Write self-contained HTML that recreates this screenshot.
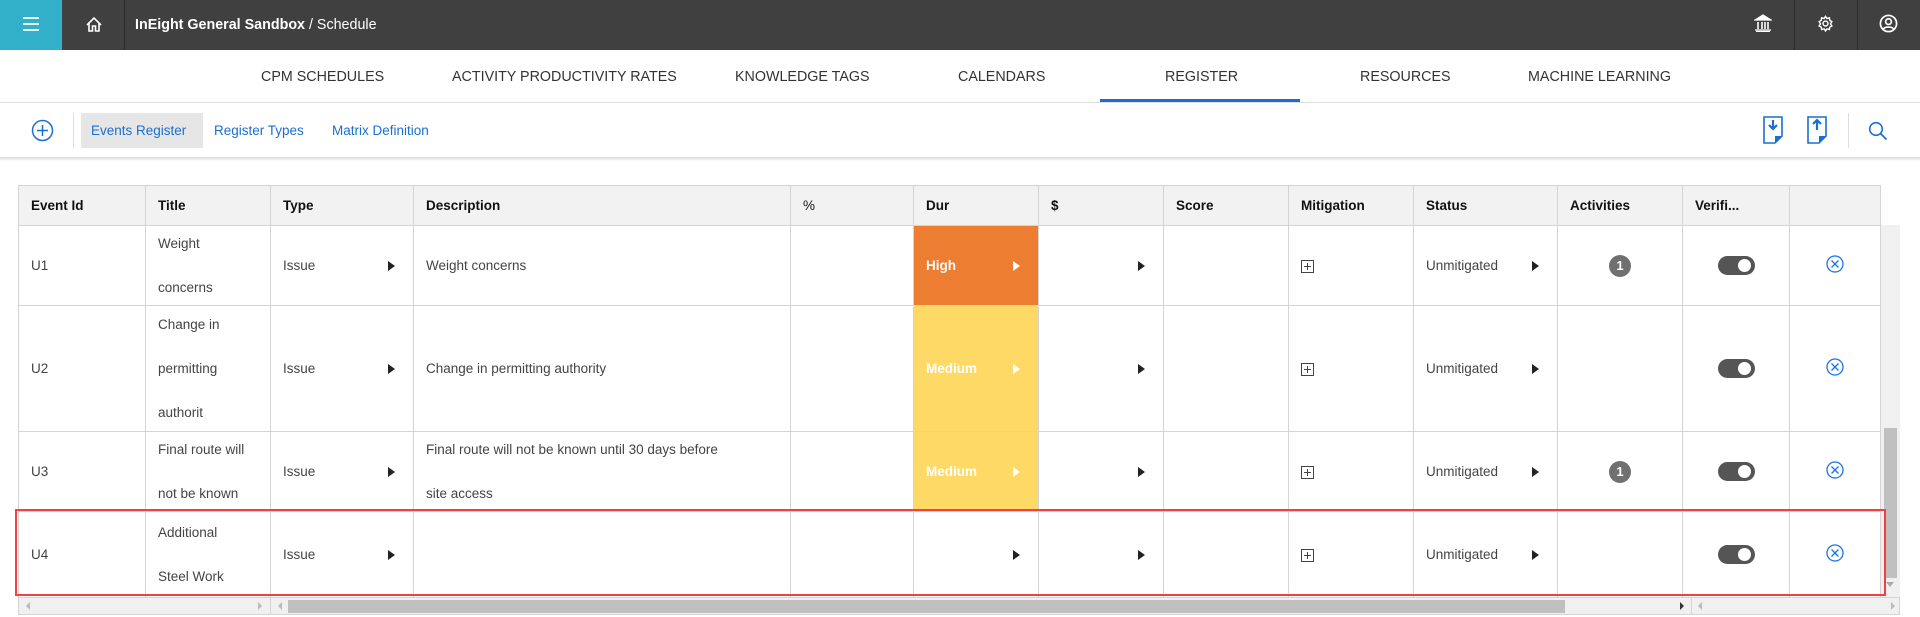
<!DOCTYPE html>
<html><head><meta charset="utf-8"><style>
*{box-sizing:border-box;margin:0;padding:0}
body{width:1920px;height:617px;background:#fff;font-family:"Liberation Sans",sans-serif;position:relative;overflow:hidden;color:#333}
.abs{position:absolute}
.top{left:0;top:0;width:1920px;height:50px;background:#404040}
.tab{position:absolute;top:69px;font-size:14.3px;color:#333;white-space:nowrap}
.tb{position:absolute;font-size:13.5px;color:#1a6fd0;top:123px}
table{position:absolute;left:18px;top:185px;width:1862px;border-collapse:collapse;table-layout:fixed;font-size:13.5px}
td,th{border:1px solid #d4d4d4;padding:0 12px;position:relative;white-space:nowrap;overflow:hidden}
th{background:#f2f2f2;height:40px;text-align:left;font-weight:bold;color:#111}
td{color:#444}
.w{position:absolute;left:12px;top:50%;transform:translateY(-50%);line-height:44px}
.arr{position:absolute;right:18px;top:50%;margin-top:-5px;width:0;height:0;border-left:7px solid #222;border-top:5px solid transparent;border-bottom:5px solid transparent}
.high{background:#ed7d31;color:#fff;font-weight:bold}
.med{background:#ffd966;color:#fff;font-weight:bold}
.high .arr,.med .arr{border-left-color:#fff}
.badge{display:inline-block;width:22px;height:22px;border-radius:50%;background:#707070;color:#fff;font-weight:bold;font-size:13px;text-align:center;line-height:22px}
.tog{display:inline-block;width:37px;height:19px;border-radius:10px;background:#555;position:relative;vertical-align:middle}
.tog:after{content:"";position:absolute;right:4px;top:3px;width:13px;height:13px;border-radius:50%;background:#fff}
.c{text-align:center}
.mit{display:inline-block;width:13px;height:13px;border:1px solid #444;position:relative;vertical-align:middle}
.mit:before{content:"";position:absolute;left:2px;top:5px;width:7px;height:1px;background:#444}
.mit:after{content:"";position:absolute;left:5px;top:2px;width:1px;height:7px;background:#444}
</style></head><body>
<div class="abs top"></div>
<div class="abs" style="left:0;top:0;width:62px;height:50px;background:#33b0c9"></div>
<svg class="abs" style="left:22px;top:16px" width="18" height="16"><path d="M1 2h16M1 8h16M1 14h16" stroke="#fff" stroke-width="1.8"/></svg>
<div class="abs" style="left:124px;top:0;width:1px;height:50px;background:#2a2a2a"></div>
<svg class="abs" style="left:85px;top:16px" width="18" height="17"><path d="M2 9L9 2l7 7M4 7v8h3.5v-5h3v5H14V7" fill="none" stroke="#fff" stroke-width="1.6"/></svg>
<div class="abs" style="left:135px;top:17px;font-size:14.3px;color:#fff"><b>InEight General Sandbox</b> / Schedule</div>
<div class="abs" style="left:1794px;top:0;width:1px;height:50px;background:#2a2a2a"></div>
<div class="abs" style="left:1857px;top:0;width:1px;height:50px;background:#2a2a2a"></div>
<svg class="abs" style="left:1754px;top:14px" width="18" height="18"><path d="M1 6L9 1l8 5z M1 16h16M2 17.5h14" fill="#fff" stroke="#fff" stroke-width="1.2"/><path d="M4 8v7M8 8v7M11 8v7M14 8v7" stroke="#fff" stroke-width="1.6"/></svg>
<svg class="abs" style="left:1817px;top:15px" width="17" height="17" viewBox="0 0 24 24"><path d="M12 2l2 3 3.5-1 .5 3.5 3 2-2 3 2 3-3 1.5-.5 3.5-3.5-1-2 3-2-3-3.5 1-.5-3.5-3-1.5 2-3-2-3 3-2 .5-3.5L10 5z" fill="none" stroke="#fff" stroke-width="2"/><circle cx="12" cy="12" r="3.5" fill="none" stroke="#fff" stroke-width="2"/></svg>
<svg class="abs" style="left:1879px;top:14px" width="19" height="19" viewBox="0 0 20 20"><circle cx="10" cy="10" r="8.5" fill="none" stroke="#fff" stroke-width="1.8"/><circle cx="10" cy="8" r="3" fill="none" stroke="#fff" stroke-width="1.8"/><path d="M4.5 16c1.5-3 9.5-3 11 0" fill="none" stroke="#fff" stroke-width="1.8"/></svg>

<div class="tab" style="left:261px">CPM SCHEDULES</div>
<div class="tab" style="left:452px">ACTIVITY PRODUCTIVITY RATES</div>
<div class="tab" style="left:735px">KNOWLEDGE TAGS</div>
<div class="tab" style="left:958px">CALENDARS</div>
<div class="tab" style="left:1165px">REGISTER</div>
<div class="tab" style="left:1360px">RESOURCES</div>
<div class="tab" style="left:1528px">MACHINE LEARNING</div>
<div class="abs" style="left:1100px;top:99px;width:200px;height:3px;background:#1a6fd0"></div>
<div class="abs" style="left:0;top:102px;width:1920px;height:1px;background:#ddd"></div>

<svg class="abs" style="left:31px;top:119px" width="23" height="23"><circle cx="11.5" cy="11.5" r="10" fill="none" stroke="#1a6fd0" stroke-width="1.5"/><path d="M11.5 6v11M6 11.5h11" stroke="#1a6fd0" stroke-width="1.5"/></svg>
<div class="abs" style="left:73px;top:113px;width:1px;height:35px;background:#ddd"></div>
<div class="abs" style="left:81px;top:113px;width:122px;height:35px;background:#e6e6e6"></div>
<div class="tb" style="left:91px">Events Register</div>
<div class="tb" style="left:214px">Register Types</div>
<div class="tb" style="left:332px">Matrix Definition</div>
<svg class="abs" style="left:1763px;top:116px" width="20" height="28"><path d="M1 1h18v19l-7 7H1z" fill="#fff" stroke="#1a6fd0" stroke-width="1.6"/><path d="M12 27l7-7h-7z" fill="#1a6fd0"/><path d="M10 4v8M6 9l4 4 4-4" stroke="#1a6fd0" stroke-width="2.2" fill="none"/></svg>
<svg class="abs" style="left:1807px;top:116px" width="20" height="28"><path d="M1 1h18v19l-7 7H1z" fill="#fff" stroke="#1a6fd0" stroke-width="1.6"/><path d="M12 27l7-7h-7z" fill="#1a6fd0"/><path d="M10 14V5M6 8l4-4 4 4" stroke="#1a6fd0" stroke-width="2.2" fill="none"/></svg>
<div class="abs" style="left:1848px;top:113px;width:1px;height:35px;background:#ddd"></div>
<svg class="abs" style="left:1868px;top:121px" width="20" height="20"><circle cx="8" cy="8" r="6.3" fill="none" stroke="#1a6fd0" stroke-width="1.6"/><path d="M12.5 12.5l6 6" stroke="#1a6fd0" stroke-width="1.8"/></svg>
<div class="abs" style="left:0;top:157px;width:1920px;height:4px;background:linear-gradient(#d8d8d8,#fff)"></div>

<table>
<colgroup><col style="width:127px"><col style="width:125px"><col style="width:143px"><col style="width:377px"><col style="width:123px"><col style="width:125px"><col style="width:125px"><col style="width:125px"><col style="width:125px"><col style="width:144px"><col style="width:125px"><col style="width:107px"><col style="width:91px"></colgroup>
<tr><th>Event Id</th><th>Title</th><th>Type</th><th>Description</th><th style="font-weight:normal">%</th><th>Dur</th><th>$</th><th>Score</th><th>Mitigation</th><th>Status</th><th>Activities</th><th>Verifi...</th><th></th></tr>
<tr style="height:80px"><td>U1</td><td><div class="w">Weight<br>concerns</div></td><td>Issue<i class="arr"></i></td><td>Weight concerns</td><td></td><td class="high">High<i class="arr"></i></td><td><i class="arr"></i></td><td></td><td><span class="mit"></span></td><td>Unmitigated<i class="arr"></i></td><td class="c"><span class="badge">1</span></td><td class="c"><span class="tog"></span></td><td class="c"><svg width="18" height="18"><circle cx="9" cy="9" r="8" fill="none" stroke="#1a73e8" stroke-width="1.3"/><path d="M5.5 5.5l7 7M12.5 5.5l-7 7" stroke="#1a73e8" stroke-width="1.3"/></svg></td></tr>
<tr style="height:126px"><td>U2</td><td><div class="w">Change in<br>permitting<br>authorit</div></td><td>Issue<i class="arr"></i></td><td>Change in permitting authority</td><td></td><td class="med">Medium<i class="arr"></i></td><td><i class="arr"></i></td><td></td><td><span class="mit"></span></td><td>Unmitigated<i class="arr"></i></td><td></td><td class="c"><span class="tog"></span></td><td class="c"><svg width="18" height="18"><circle cx="9" cy="9" r="8" fill="none" stroke="#1a73e8" stroke-width="1.3"/><path d="M5.5 5.5l7 7M12.5 5.5l-7 7" stroke="#1a73e8" stroke-width="1.3"/></svg></td></tr>
<tr style="height:80px"><td>U3</td><td><div class="w">Final route will<br>not be known</div></td><td>Issue<i class="arr"></i></td><td><div class="w">Final route will not be known until 30 days before<br>site access</div></td><td></td><td class="med">Medium<i class="arr"></i></td><td><i class="arr"></i></td><td></td><td><span class="mit"></span></td><td>Unmitigated<i class="arr"></i></td><td class="c"><span class="badge">1</span></td><td class="c"><span class="tog"></span></td><td class="c"><svg width="18" height="18"><circle cx="9" cy="9" r="8" fill="none" stroke="#1a73e8" stroke-width="1.3"/><path d="M5.5 5.5l7 7M12.5 5.5l-7 7" stroke="#1a73e8" stroke-width="1.3"/></svg></td></tr>
<tr style="height:86px"><td>U4</td><td><div class="w">Additional<br>Steel Work</div></td><td>Issue<i class="arr"></i></td><td></td><td></td><td><i class="arr"></i></td><td><i class="arr"></i></td><td></td><td><span class="mit"></span></td><td>Unmitigated<i class="arr"></i></td><td></td><td class="c"><span class="tog"></span></td><td class="c"><svg width="18" height="18"><circle cx="9" cy="9" r="8" fill="none" stroke="#1a73e8" stroke-width="1.3"/><path d="M5.5 5.5l7 7M12.5 5.5l-7 7" stroke="#1a73e8" stroke-width="1.3"/></svg></td></tr>
</table>
<!-- vertical scrollbar -->
<div class="abs" style="left:1881px;top:225px;width:19px;height:372px;background:#f0f0f0"></div>
<div class="abs" style="left:1884px;top:428px;width:13px;height:150px;background:#c0c0c0"></div>
<div class="abs" style="left:1886px;top:582px;width:0;height:0;border-top:5px solid #aaa;border-left:4px solid transparent;border-right:4px solid transparent"></div>
<!-- horizontal scrollbar -->
<div class="abs" style="left:0;top:597px;width:1920px;height:20px;background:#fff"></div>
<div class="abs" style="left:18px;top:597px;width:1882px;height:18px;background:#f0f0f0;border:1px solid #d4d4d4"></div>
<div class="abs" style="left:270px;top:597px;width:1px;height:18px;background:#d4d4d4"></div>
<div class="abs" style="left:1691px;top:597px;width:1px;height:18px;background:#d4d4d4"></div>
<div class="abs" style="left:288px;top:600px;width:1277px;height:13px;background:#c0c0c0"></div>
<div class="abs" style="left:26px;top:602px;border-right:4px solid #bbb;border-top:4px solid transparent;border-bottom:4px solid transparent"></div>
<div class="abs" style="left:258px;top:602px;border-left:4px solid #bbb;border-top:4px solid transparent;border-bottom:4px solid transparent"></div>
<div class="abs" style="left:278px;top:602px;border-right:4px solid #bbb;border-top:4px solid transparent;border-bottom:4px solid transparent"></div>
<div class="abs" style="left:1680px;top:602px;border-left:4px solid #333;border-top:4px solid transparent;border-bottom:4px solid transparent"></div>
<div class="abs" style="left:1698px;top:602px;border-right:4px solid #bbb;border-top:4px solid transparent;border-bottom:4px solid transparent"></div>
<div class="abs" style="left:1891px;top:602px;border-left:4px solid #bbb;border-top:4px solid transparent;border-bottom:4px solid transparent"></div>
<!-- red highlight -->
<div class="abs" style="left:15px;top:509px;width:1871px;height:87px;border:2.5px solid #f04040"></div>
</body></html>
